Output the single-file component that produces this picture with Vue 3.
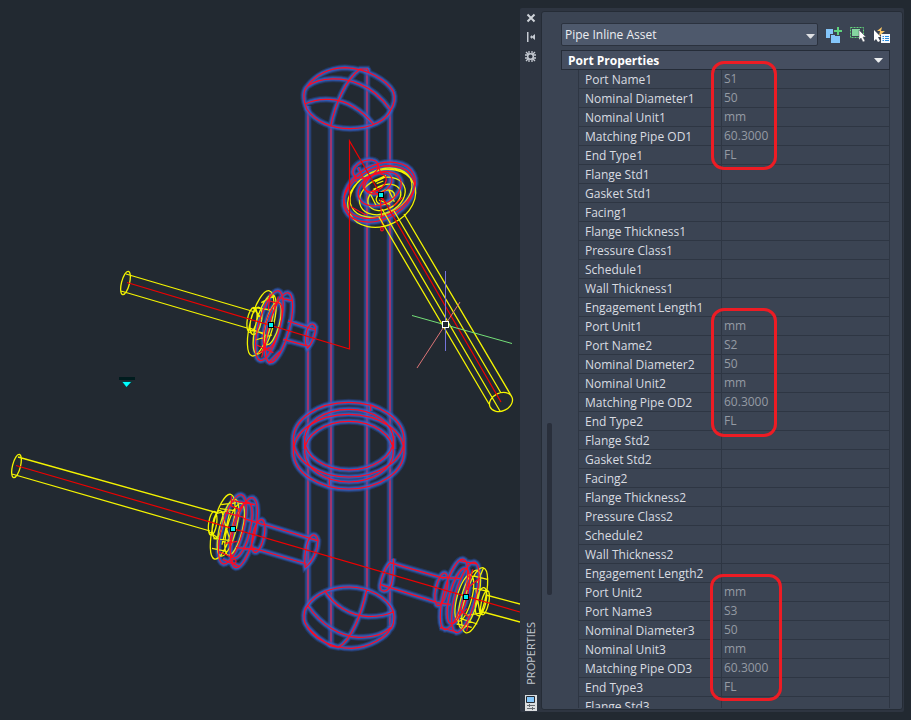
<script setup>
import { ref } from 'vue'

const object = ref('Pipe Inline Asset')
const open = ref(true)

const fields = [
  ['Port Name', (n) => `S${n}`],
  ['Nominal Diameter', () => '50'],
  ['Nominal Unit', () => 'mm'],
  ['Matching Pipe OD', () => '60.3000'],
  ['End Type', () => 'FL'],
  ['Flange Std', () => ''],
  ['Gasket Std', () => ''],
  ['Facing', () => ''],
  ['Flange Thickness', () => ''],
  ['Pressure Class', () => ''],
  ['Schedule', () => ''],
  ['Wall Thickness', () => ''],
  ['Engagement Length', () => ''],
  ['Port Unit', () => 'mm'],
]
const rows = [1, 2, 3]
  .flatMap((n) => fields.map(([label, value]) => ({ label: label + n, value: value(n) })))
  .slice(0, 34)

// Ellipse as path data: centre, radii, rotation in degrees
function ell(cx, cy, rx, ry, rot = 0) {
  const a = (rot * Math.PI) / 180
  const dx = rx * Math.cos(a)
  const dy = rx * Math.sin(a)
  return `M${cx - dx} ${cy - dy}A${rx} ${ry} ${rot} 1 1 ${cx + dx} ${cy + dy}A${rx} ${ry} ${rot} 1 1 ${cx - dx} ${cy - dy}`
}

// Model parts are drawn at three times size around their own origin
const parts = [
  {
    id: 'top-cap', x: 290, y: 55,
    glow: [
      'M52 94C75 62 115 40 165 38C230 40 290 75 310 110',
      'M52 94C38 108 40 135 50 162C75 200 125 221 180 221C245 221 290 195 302 165C315 145 315 125 310 110',
      'M52 94C90 65 160 65 210 88C250 103 280 135 302 165',
      'M45 147C90 125 150 130 190 155C215 170 235 188 250 207',
      'M122 214C135 150 165 75 210 42L232 42L236 50',
    ].join(''),
    yellow: '', red: '',
  },
  {
    id: 'bottom-cap', x: 290, y: 540,
    glow: [
      'M52 198C75 160 125 141 178 141C235 142 290 170 310 215C316 240 308 262 300 268',
      'M52 198C38 215 42 240 45 248C70 300 130 325 185 325C240 322 290 290 300 268',
      'M104 152C130 195 180 228 235 230C265 230 290 228 312 214',
      'M54 198C95 255 150 290 205 292C250 292 285 280 302 262',
      'M230 150C215 220 185 300 145 322L122 318L84 292C65 275 50 262 45 248',
    ].join(''),
    yellow: '', red: '',
  },
  {
    id: 'ring', x: 280, y: 385,
    glow: ell(206, 164, 166, 112) + ell(206, 200, 166, 112) + ell(207, 164, 133, 91) + ell(207, 200, 133, 91)
      + 'M272 58V78M148 278V300M40 158V208M372 158V208M74 152V192M341 152V192',
    yellow: '', red: '',
  },
  {
    id: 'nozzle-mid', x: 230, y: 270,
    glow: ell(118, 167, 32, 108, 15) + ell(147, 173, 31, 108, 15) + ell(128, 168, 22, 72, 15)
      + 'M174 153L257 180M160 208L237 229M239 166C226 180 222 218 232 234C246 222 257 192 257 172C252 160 244 160 239 166M155 85L185 92M150 245L115 280',
    yellow: ell(92, 160, 31, 101, 15) + ell(104, 163, 26, 92, 15) + ell(128, 160, 20, 66, 15) + ell(66, 150, 14, 38, 10) + ell(78, 153, 16, 42, 12)
      + 'M75 113L122 120M60 174L112 198M94 98L130 78M52 178L104 190M76 210L126 195M70 114L96 147',
    red: 'M120 70L115 120M145 80L130 130M85 250L118 232M95 262L108 205M110 90L142 100M80 225L130 248',
  },
  {
    id: 'nozzle-left', x: 200, y: 480,
    glow: ell(97, 148, 32, 107, 15) + ell(132, 158, 32, 108, 14) + ell(123, 150, 27, 86, 14)
      + ell(175, 168, 17, 50, 12)
      + 'M190 132L352 182M155 203L320 252M335 167C316 182 312 240 316 262C338 245 355 210 354 180C350 166 342 162 335 167M130 115L194 135M108 203L165 208M98 62L165 74M68 238L120 260',
    yellow: ell(68, 140, 29, 100, 14) + ell(84, 143, 25, 88, 14) + ell(104, 148, 23, 80, 14) + ell(38, 130, 12, 36, 8) + ell(53, 133, 15, 42, 10)
      + 'M50 100L88 92M28 156L78 190M64 74L108 68M36 205L80 214M72 120L88 174M60 86L104 92M40 176L94 182M90 94L66 194',
    red: 'M94 48L94 78L118 88M60 216L96 232M76 98L132 112M76 190L112 184' + ell(102, 244, 6, 6),
  },
  {
    id: 'nozzle-right', x: 290, y: 540,
    glow: ell(492, 163, 31, 109, 15) + ell(526, 172, 31, 109, 15) + ell(505, 168, 26, 86, 15)
      + ell(454, 148, 17, 50, 12)
      + 'M300 68L462 115M272 134L440 187M300 68C285 80 265 135 272 149C285 160 300 148 305 130C310 105 312 82 310 56M455 112L515 116M440 188L482 194M510 62L560 72M450 262L500 276',
    yellow: ell(554, 181, 30, 101, 15) + ell(538, 178, 25, 90, 15) + ell(523, 174, 22, 72, 15) + ell(585, 188, 11, 37, 12) + ell(573, 185, 15, 43, 12)
      + 'M598 155L548 144M580 218L530 226M580 85L562 128M552 108L592 118M510 235L562 252M500 252L545 262M558 150L570 220',
    red: 'M548 88L532 150M570 114L535 142M510 210L535 230M505 230L532 205M535 250L530 274',
  },
  {
    id: 'nozzle-top', x: 335, y: 150,
    glow: ell(134, 121, 113, 76, -26) + ell(132, 132, 112, 76, -26) + ell(134, 116, 68, 47, -26) + ell(130, 100, 43, 29, -26)
      + ell(92, 57, 40, 25, -22) + 'M55 70L64 96M125 42L140 72M70 52L88 92',
    yellow: ell(140, 145, 106, 82, -26) + ell(138, 128, 98, 67, -26) + ell(142, 138, 72, 52, -26) + ell(148, 142, 52, 36, -26) + ell(151, 142, 29, 20, -26)
      + 'M120 92L153 76M120 96L153 80M125 101L145 93M115 118L150 104M132 150L165 163M106 132L124 168M162 122L178 155',
    red: ell(119, 98, 37, 24, -26) + ell(141, 238, 4, 5) + 'M145 48L170 48M48 170L94 196M176 168L202 142M136 150L142 226M111 120L152 156',
  },
]

const verticals = 'M308 106V608M331 127V647M367 68V592M390 110V627'
const yellowPipes = [
  'M126 274L255 312M121 291L247 328', ell(125.5, 283, 4, 12, 14),
  'M18 457L218 513M12 474L210 531', ell(16.5, 466, 4, 12, 14),
  'M486 595L520 604M483 612L520 622',
  'M379 217L489 404M382 209L500 411M394 211L501 393M404 214L512 397', ell(501, 402, 12, 9, -25),
].join('')
const centrelines = 'M127 282.5L349.5 349V141L501 402M16 465.5L520 612'
const grips = [[381, 195], [271, 325], [233, 529], [466, 597]]
</script>

<template>
  <div class="workspace">
    <main class="viewport">
      <svg class="model" viewBox="0 0 520 720" preserveAspectRatio="xMinYMin slice" fill="none" role="img" aria-label="Pipe model">
        <path class="halo" :d="verticals" />
        <path class="edge" :d="verticals" />
        <path class="mixed" :d="verticals" />
        <g v-for="p in parts" :key="p.id" :transform="`translate(${p.x} ${p.y}) scale(0.33333)`">
          <path class="halo" :d="p.glow" />
          <path class="edge" :d="p.glow" />
          <path class="core" :d="p.glow" />
          <path class="yellow" :d="p.yellow" />
          <path class="veil" :d="p.glow" />
          <path class="red" :d="p.glow" />
          <path class="red" :d="p.red" />
        </g>
        <path class="yellow" :d="yellowPipes" />
        <path class="centre" :d="centrelines" />
        <path stroke="#7474dc" d="M445.500 271V351" />
        <path stroke="#74df78" d="M412 315.500L512 343.500" />
        <path stroke="#dc7476" d="M460 302L417 368" />
        <rect x="442.500" y="321.500" width="6" height="6" fill="#222931" stroke="#fff" />
        <rect v-for="g in grips" :key="g[0]" :x="g[0] - 2.5" :y="g[1] - 2.5" width="5" height="5" fill="#00f0f0" stroke="#000" />
        <path d="M119 378.500H135" stroke="#001c1e" stroke-width="3" />
        <path d="M121 381H133L126.500 388Z" fill="#0b3a3e" />
        <path d="M122.500 382H131L126.500 387Z" fill="#0ff" />
      </svg>
    </main>

    <aside class="palette">
      <div class="strip">
        <div class="strip-buttons">
          <button class="tool" aria-label="Close">
            <svg viewBox="0 0 10 10" width="10" height="10"><path d="M1.500 1.500L8.500 8.500M8.500 1.500L1.500 8.500" stroke="#d0d4da" stroke-width="2" /></svg>
          </button>
          <button class="tool" aria-label="Auto-hide">
            <svg viewBox="0 0 10 10" width="10" height="10" fill="#c5cad2"><path d="M1 0H2.500V10H1ZM4 5L6 3V7ZM6 4.500L9 2V8L6 5.500Z" /></svg>
          </button>
          <button class="tool" aria-label="Settings">
            <svg viewBox="0 0 11 11" width="11" height="11" stroke="#c5cad2" fill="none"><circle cx="5.500" cy="5.500" r="2.800" stroke-width="1.500" /><path d="M4 0V2.500M7 0V2.500M4 8.500V11M7 8.500V11M0 4H2.500M0 7H2.500M8.500 4H11M8.500 7H11M1 1L3.500 3.500M10 1L7.500 3.500M1 10L3.500 7.500M10 10L7.500 7.500" stroke-width="1.300" /></svg>
          </button>
        </div>
        <div class="strip-title">
          <span class="vertical">PROPERTIES</span>
          <svg viewBox="0 0 12 16" width="12" height="16"><path d="M0 0H12V16H0Z" fill="#dcdee0" /><path d="M1.500 1.500H9.500V7.500H1.500Z" fill="#84c6fa" stroke="#242b35" /><path d="M2 10.500H10M2 13.500H10M4.500 9V12M7.500 12V15" stroke="#666b72" /></svg>
        </div>
      </div>

      <div class="body">
        <div class="selector">
          <div class="combo">
            <select v-model="object" aria-label="Object type"><option>Pipe Inline Asset</option></select>
            <svg class="caret" viewBox="0 0 9 5" width="9" height="5"><path d="M0 0H9L5 4.500H4Z" fill="#dfe1e4" /></svg>
          </div>
          <button class="tool" aria-label="Toggle PICKADD">
            <svg viewBox="0 0 17 17" width="17" height="17"><path d="M1 3H8V8H5V12H1Z" fill="#84c6fa" /><path d="M6 9H10V10H15V17H6Z" fill="#84c6fa" /><path d="M13 1V9M9 5H17" stroke="#5fd37d" stroke-width="2" /></svg>
          </button>
          <button class="tool" aria-label="Select objects">
            <svg viewBox="0 0 17 17" width="17" height="17"><rect x="1.500" y="1.500" width="13" height="10" fill="none" stroke="#62d47b" stroke-dasharray="2 1" /><path d="M3 3H11V10H3Z" fill="#85d5a0" /><path d="M10 4V14L12 12L14 16L16 15L14 11H17Z" fill="#fff" stroke="#444b56" stroke-width=".5" /></svg>
          </button>
          <button class="tool" aria-label="Quick select">
            <svg viewBox="0 0 17 17" width="17" height="17"><path d="M9 1L4 5H7L6 10L12 5H8Z" fill="#ffc967" /><path d="M1 4V15L3 13L5 16L7 15L5 11H8Z" fill="#fff" /><path d="M8 8H17V17H8Z" fill="#f4f7fa" /><path d="M9.500 10.500H11M12 10.500H16M9.500 12.500H11M12 12.500H16M9.500 14.500H11M12 14.500H16" stroke="#258be0" /></svg>
          </button>
        </div>

        <div class="list">
          <span class="scroll-thumb"></span>
          <div class="section">
            <button class="section-head" :aria-expanded="open" @click="open = !open">
              <span>Port Properties</span>
              <svg viewBox="0 0 9 5" width="9" height="5"><path d="M0 0H9L5 4.500H4Z" fill="#eceef0" /></svg>
            </button>
            <table v-if="open" class="props">
              <tbody>
                <tr v-for="row in rows" :key="row.label">
                  <th scope="row">{{ row.label }}</th>
                  <td>{{ row.value }}</td>
                </tr>
              </tbody>
            </table>
            <span class="mark mark-1"></span>
            <span class="mark mark-2"></span>
            <span class="mark mark-3"></span>
          </div>
        </div>
      </div>
    </aside>
  </div>
</template>

<style>
body {
  background: #222931;
}
</style>

<style scoped>
* {
  box-sizing: border-box;
}
.workspace {
  display: flex;
  height: 100vh;
  overflow: hidden;
  background: #222931;
  font-family: "Open Sans", "Noto Sans", sans-serif;
  font-size: 12px;
  color: #d9dce1;
}
.viewport {
  flex: 1;
  min-width: 0;
}
.model {
  display: block;
  width: 100%;
  height: 100%;
}
.model path {
  vector-effect: non-scaling-stroke;
}
.halo {
  stroke: #2c52b0;
  stroke-width: 7px;
  stroke-opacity: 0.35;
}
.edge {
  stroke: #3462c8;
  stroke-width: 5px;
  stroke-opacity: 0.45;
}
.core {
  stroke: #4070e0;
  stroke-width: 3px;
  stroke-opacity: 0.4;
}
.veil {
  stroke: #3d6be0;
  stroke-width: 4px;
  stroke-opacity: 0.15;
}
.mixed {
  stroke: #a0356e;
  stroke-width: 2px;
}
.yellow {
  stroke: #f4f400;
  stroke-width: 1.3px;
}
.red {
  stroke: #ff0a20;
  stroke-width: 1.2px;
}
.centre {
  stroke: #f00000;
  stroke-width: 1.2px;
}
.palette {
  display: flex;
  flex: 0 0 384px;
  margin: 8px 7px 8px 0;
  background: #2e3541;
  border-radius: 2px;
}
.tool {
  display: flex;
  padding: 0;
  border: 0;
  background: none;
}
.strip {
  display: flex;
  flex-direction: column;
  justify-content: space-between;
  align-items: center;
  width: 21px;
  padding: 5px 0 1px;
}
.strip-buttons {
  display: flex;
  flex-direction: column;
  align-items: center;
  gap: 9px;
}
.strip-title {
  display: flex;
  flex-direction: column;
  align-items: center;
  gap: 10px;
}
.vertical {
  writing-mode: vertical-rl;
  transform: rotate(180deg);
  font-size: 11px;
  line-height: 16px;
  color: #c3c8cf;
}
.body {
  display: flex;
  flex-direction: column;
  flex: 1;
  min-width: 0;
  gap: 4px;
  margin: 3px 1px 2px 0;
  padding: 11px 12px 1px 5px;
  background: #3b4453;
  border: 1px solid #252c36;
  border-radius: 3px;
}
.selector {
  display: flex;
  align-items: center;
  gap: 7px;
  padding-left: 14px;
}
.combo {
  position: relative;
  flex: 1;
  height: 23px;
}
.combo select {
  appearance: none;
  width: 100%;
  height: 100%;
  padding: 0 20px 0 3px;
  border: 1px solid #2b323e;
  border-radius: 2px;
  background: #4e596c;
  color: #eceef1;
  font: inherit;
}
.caret {
  position: absolute;
  right: 3px;
  top: 11px;
}
.list {
  position: relative;
  flex: 1;
  min-height: 0;
  padding-left: 14px;
  overflow: hidden;
}
.scroll-thumb {
  position: absolute;
  left: 0;
  top: 373px;
  width: 5px;
  height: 172px;
  border-radius: 2px;
  background: #292f3b;
}
.section {
  position: relative;
}
.section-head {
  display: flex;
  align-items: center;
  justify-content: space-between;
  width: 100%;
  height: 20px;
  padding: 0 6px;
  border: 1px solid #252c38;
  background: #454e60;
  color: #fff;
  font: inherit;
  font-weight: 700;
}
.props {
  width: calc(100% - 17px);
  margin-left: 17px;
  table-layout: fixed;
  border-collapse: separate;
  border-spacing: 0;
  border: solid #2e3643;
  border-width: 0 1px;
}
.props th,
.props td {
  height: 19px;
  padding: 0 2px;
  border-bottom: 1px solid #2e3643;
  line-height: 18px;
  text-align: left;
  vertical-align: top;
  font-weight: 400;
  white-space: nowrap;
}
.props th {
  width: 143px;
  padding: 2px 0 0 6px;
  border-right: 1px solid #2e3643;
  line-height: 16px;
}
.props td {
  color: #959ba4;
}
.mark {
  position: absolute;
  left: 150px;
  width: 66px;
  border: 3px solid #ed1c24;
  border-radius: 13px;
  pointer-events: none;
}
.mark-1 {
  top: 11px;
  height: 109px;
}
.mark-2 {
  top: 258px;
  height: 129px;
}
.mark-3 {
  top: 524px;
  left: 149px;
  width: 72px;
  height: 127px;
}
</style>
